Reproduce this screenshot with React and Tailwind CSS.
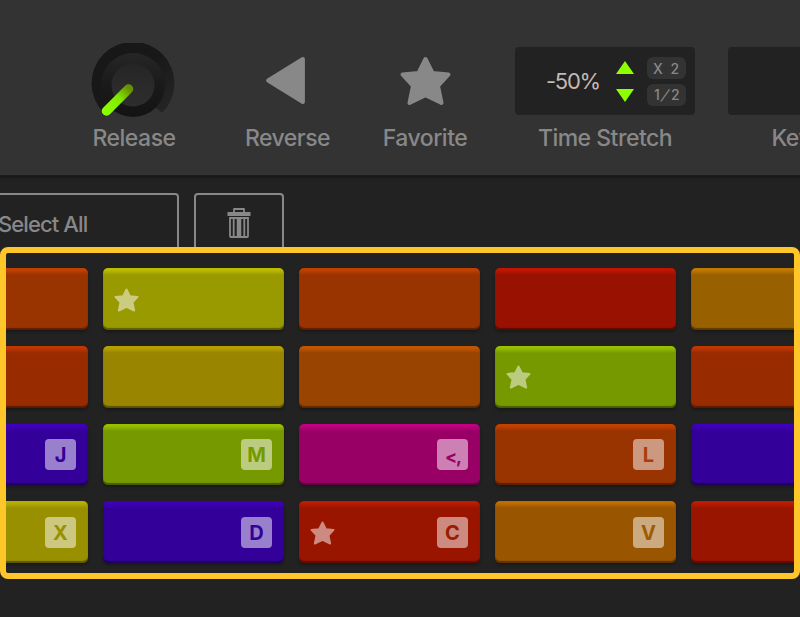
import clsx from "clsx";

const STAR_PATH =
  "M26 3 L33 17 L49 18.5 L38.5 30 L42 47 L26 39.3 L10 47 L13.5 30 L3 18.5 L19 17 Z";

// top edge highlight fades into the pad colour
const COLORS = {
  rust: "from-[#c24100] to-[#993300]",
  brick: "from-[#c23700] to-[#992b00]",
  red: "from-[#c01500] to-[#991100]",
  crimson: "from-[#c01b00] to-[#991500]",
  amber: "from-[#c27a00] to-[#996000]",
  ochre: "from-[#c26c00] to-[#995500]",
  orange: "from-[#c25600] to-[#994400]",
  gold: "from-[#b8a000] to-[#998500]",
  mustard: "from-[#b8ae00] to-[#999000]",
  yellow: "from-[#bcbc00] to-[#999900]",
  green: "from-[#96c000] to-[#779900]",
  violet: "from-[#4000bb] to-[#330099]",
  magenta: "from-[#c00080] to-[#990066]",
};

const PAD_ROWS = [
  [
    { color: "rust" },
    { color: "yellow", favorite: true },
    { color: "rust" },
    { color: "red" },
    { color: "amber" },
  ],
  [
    { color: "brick" },
    { color: "gold" },
    { color: "orange" },
    { color: "green", favorite: true },
    { color: "brick" },
  ],
  [
    { color: "violet", hotkey: "J", keyColor: "text-[#330099]" },
    { color: "green", hotkey: "M", keyColor: "text-[#779900]" },
    { color: "magenta", hotkey: "<,", keyColor: "text-[#990066]" },
    { color: "rust", hotkey: "L", keyColor: "text-[#aa3d0a]" },
    { color: "violet" },
  ],
  [
    { color: "mustard", hotkey: "X", keyColor: "text-[#999000]" },
    { color: "violet", hotkey: "D", keyColor: "text-[#330099]" },
    { color: "crimson", favorite: true, hotkey: "C", keyColor: "text-[#991d00]" },
    { color: "ochre", hotkey: "V", keyColor: "text-[#a05a00]" },
    { color: "crimson" },
  ],
];

const Star = ({ className }) => (
  <svg viewBox="0 0 52 50" className={className}>
    <path d={STAR_PATH} fill="currentColor" stroke="currentColor" strokeWidth="4" strokeLinejoin="round" />
  </svg>
);

const Knob = () => (
  <svg viewBox="0 0 84 76" className="h-[76px] w-[84px]">
    <defs>
      <linearGradient id="knobFace" x1="0" y1="0" x2="0" y2="1">
        <stop offset="0" stopColor="#252525" />
        <stop offset="0.6" stopColor="#2b2b2b" />
        <stop offset="1" stopColor="#2d2d2d" />
      </linearGradient>
      <linearGradient id="knobBody" x1="0" y1="0" x2="0" y2="1">
        <stop offset="0" stopColor="#262626" />
        <stop offset="0.5" stopColor="#1a1a1a" />
        <stop offset="1" stopColor="#131313" />
      </linearGradient>
      <linearGradient id="track" x1="0" y1="0" x2="1" y2="1">
        <stop offset="0" stopColor="#171717" />
        <stop offset="0.5" stopColor="#181818" />
        <stop offset="1" stopColor="#272727" />
      </linearGradient>
      <linearGradient id="needle" x1="14" y1="69" x2="38" y2="46" gradientUnits="userSpaceOnUse">
        <stop offset="0" stopColor="#8cff00" />
        <stop offset="0.6" stopColor="#80e800" />
        <stop offset="1" stopColor="#689000" />
      </linearGradient>
    </defs>
    {/* outer track, open at the bottom */}
    <path d="M13 70 A41.5 41.5 0 1 1 71 70 L64 64 L20 64 Z" fill="url(#track)" />
    <circle cx="42" cy="42" r="32" fill="url(#knobBody)" />
    <circle cx="42" cy="42" r="21.5" fill="url(#knobFace)" />
    <path d="M15.5 68 L37.5 46" stroke="url(#needle)" strokeWidth="9.5" strokeLinecap="round" />
  </svg>
);

const Control = ({ label, className, children }) => (
  <div className={clsx("flex shrink-0 flex-col items-center", className)}>
    <div className="flex h-[83px] items-center justify-center">{children}</div>
    <span className="whitespace-nowrap text-[23px] leading-[27px] font-medium tracking-[-0.5px] text-[#888]">{label}</span>
  </div>
);

const ValueBox = ({ children }) => (
  <div className="mb-[5px] flex h-[68px] w-[180px] items-center rounded-[4px] bg-[#222]">{children}</div>
);

const Pad = ({ color, favorite, hotkey, keyColor }) => (
  <div
    className={clsx(
      "flex h-[61.7px] w-[181px] shrink-0 items-center rounded-[5px] bg-linear-to-b from-[2px] to-[7px] pl-[11px] pr-[12px]",
      "shadow-[0_2px_3px_rgba(0,0,0,0.3),inset_0_-2px_1px_rgba(0,0,0,0.4)]",
      COLORS[color]
    )}
  >
    {favorite && <Star className="mt-px h-6 w-[25px] text-white opacity-50" />}
    {hotkey && (
      <span
        className={clsx(
          "ml-auto flex h-[31px] w-[31px] items-center justify-center rounded-[4px] bg-white/50 font-bold",
          hotkey.length > 1 ? "pt-[3px] pl-px text-[18px] tracking-[-1px]" : "pt-px text-[20px]",
          keyColor
        )}
      >
        {hotkey}
      </span>
    )}
  </div>
);

export default function App() {
  return (
    <div className="flex h-[617px] w-[800px] flex-col overflow-hidden bg-[#222] font-['Inter','Liberation_Sans',sans-serif]">
      {/* Sample controls */}
      <header className="flex h-[176px] shrink-0 border-b border-[#1c1c1c] bg-[#333] pt-[42px] pl-[91px] shadow-[0_1px_3px_rgba(0,0,0,0.5)]">
        <Control label="Release" className="w-[86px]">
          <div className="mr-[2px] mb-[5px]">
            <Knob />
          </div>
        </Control>
        <Control label="Reverse" className="ml-[68px] w-[85px]">
          <svg viewBox="0 0 40 48" className="mb-[6px] ml-[-4px] h-[49px] w-[41px]">
            <path d="M37 3 V45 L3 24 Z" fill="#888" stroke="#888" strokeWidth="4" strokeLinejoin="round" />
          </svg>
        </Control>
        <Control label="Favorite" className="ml-[52px] w-[86px]">
          <Star className="mb-[6px] h-[50px] w-[53px] text-[#888]" />
        </Control>
        <Control label="Time Stretch" className="ml-[47px] w-[180px]">
          <ValueBox>
            <span className="ml-[31px] w-[54px] whitespace-nowrap text-[22px] tracking-[-1.3px] text-[#c4b8b4]">-50%</span>
            <div className="ml-[16px] flex flex-col gap-[15px]">
              <svg viewBox="0 0 18 13" className="h-[13px] w-[18px]">
                <path d="M0 13 L9 0 L18 13 Z" fill="#8cff00" />
              </svg>
              <svg viewBox="0 0 18 13" className="h-[13px] w-[18px]">
                <path d="M0 0 L18 0 L9 13 Z" fill="#8cff00" />
              </svg>
            </div>
            <div className="ml-[13px] flex flex-col gap-[5px] text-[14px] leading-[24px] font-medium text-[#888]">
              <span className="h-[22px] w-[39px] rounded-[6px] bg-[#333] pl-[6px] tracking-[2px]">X 2</span>
              <span className="h-[22px] w-[39px] rounded-[6px] bg-[#333] pl-[7px] leading-[21px]">
                1<span className="mx-[3px] inline-block -skew-x-[24deg]">/</span>2
              </span>
            </div>
          </ValueBox>
        </Control>
        <Control label="Key Shift" className="ml-[33px] w-[180px]">
          <ValueBox />
        </Control>
      </header>

      {/* Selection toolbar */}
      <div className="flex h-[71px] shrink-0 gap-[15px] overflow-hidden pt-[17px]">
        <div className="ml-[-20px] h-[64px] w-[199px] rounded-[4px] border-2 border-[#888] pt-[14px] pl-[16px] text-[22px] leading-[30px] font-medium tracking-[-0.9px] text-[#888]">
          Select All
        </div>
        <div className="flex h-[64px] w-[90px] justify-center rounded-[4px] border-2 border-[#888] pt-[13px]">
          <svg viewBox="0 0 24 30" className="h-[30px] w-6" fill="none" stroke="#888">
            <path d="M7 4 V1 H17 V4" strokeWidth="1.8" strokeLinejoin="round" />
            <path d="M0.5 6 H23.5" strokeWidth="4" />
            <path d="M3 10 V28 Q3 29 4 29 H20 Q21 29 21 28 V10 Z" strokeWidth="1.8" />
            <path d="M6.7 10 V29 M17.3 10 V29" strokeWidth="1.8" />
            <path d="M12 10 V29" strokeWidth="4.5" />
          </svg>
        </div>
      </div>

      {/* Pad grid */}
      <main className="flex h-[332px] shrink-0 flex-col gap-4 overflow-hidden rounded-[8px] border-6 border-[#ffc629] pt-[15.3px]">
        {PAD_ROWS.map((row, i) => (
          <div key={i} className="ml-[-99px] flex gap-[15px]">
            {row.map((pad, j) => (
              <Pad key={j} {...pad} />
            ))}
          </div>
        ))}
      </main>
    </div>
  );
}
